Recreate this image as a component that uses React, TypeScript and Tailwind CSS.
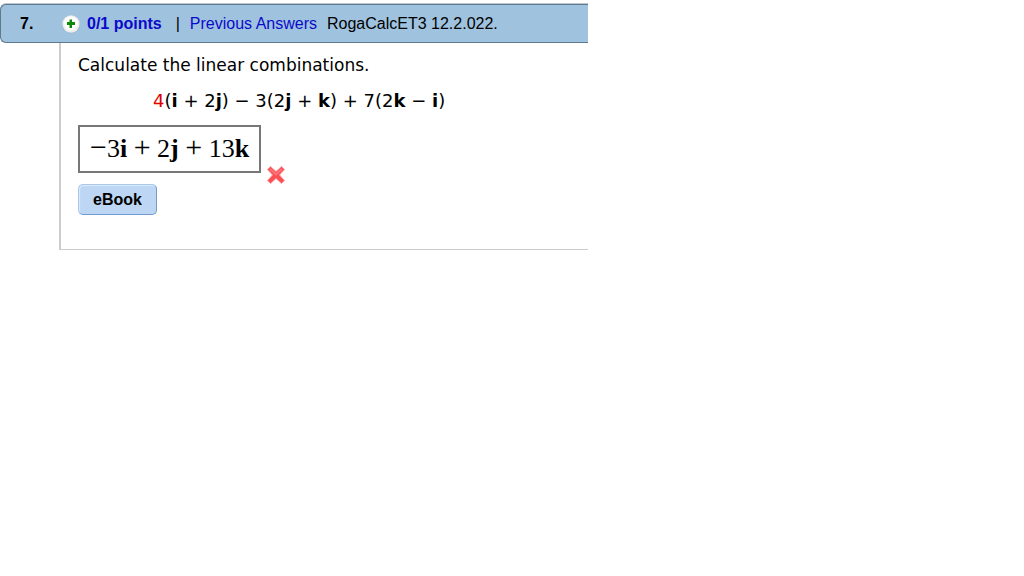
import { ReactNode } from 'react';

function ExpandIcon() {
  return (
    <svg className="block h-5 w-5" viewBox="0 0 20 20" aria-hidden="true">
      <circle cx="10" cy="10.5" r="9" fill="#7f9db5" opacity="0.5" />
      <circle cx="10" cy="10" r="8.7" fill="#eeeeee" />
      <circle cx="10" cy="9.5" r="7" fill="#ffffff" />
      <path d="M8.5 5.5h2.500v2.500H14v3h-3V14H8.500v-3H6V8h2.500z" fill="#0c8a0c" />
    </svg>
  );
}

function WrongIcon() {
  return (
    <svg className="block h-5 w-5" viewBox="0 0 20 20" role="img" aria-label="Incorrect">
      <path
        d="M4.500 1.500 10 6.500l5.500-5 3 3L13.500 10l5 5.500-3 3L10 13.500l-5.500 5-3-3 5-5.500-5-5.500z"
        fill="#fb4f54"
        stroke="#fd9a9d"
        strokeWidth="1"
        strokeLinejoin="round"
      />
      <path d="M4.500 4.500 10 9.500l5.500-5" stroke="#fd7377" strokeWidth="2" fill="none" strokeLinecap="round" />
    </svg>
  );
}

function Vec({ children }: { children: ReactNode }) {
  return <b className="font-bold">{children}</b>;
}

function Op({ children }: { children: ReactNode }) {
  return <span className="text-[30px] leading-none">{children}</span>;
}

export default function App() {
  return (
    <main className="w-full max-w-[588px] pt-1 text-black">
      {/* Question header */}
      <header className="flex h-[39px] items-center rounded-l-md border-y border-l border-[#5f7a8e] bg-[#9fc2df] pt-px font-['Liberation_Sans',Arial,sans-serif] text-base whitespace-nowrap shadow-[0_-1px_0_#b9c6d0]">
        <span className="w-[60px] pl-[19px] font-bold">7.</span>
        <button type="button" aria-label="Show scoring details" className="mr-[6px] cursor-pointer">
          <ExpandIcon />
        </button>
        <a href="#points" className="font-bold text-[#0a0acb]">0/1 points</a>
        <span className="mr-[10px] ml-[14px]">|</span>
        <a href="#previous" className="mr-[10px] text-[#0a0acb]">Previous Answers</a>
        <span>RogaCalcET3 12.2.022.</span>
      </header>

      {/* Question body */}
      <section className="ml-[59px] border-b border-l-2 border-[#cccccc] pt-2 pb-[34px] pl-[17px] font-['DejaVu_Sans',Verdana,sans-serif] text-lg">
        <p className="text-[17px] leading-7">Calculate the linear combinations.</p>
        <p className="mt-2 pl-[75px]">
          <span className="text-[#e00000]">4</span>(<Vec>i</Vec> + 2<Vec>j</Vec>) − 3(2<Vec>j</Vec> + <Vec>k</Vec>) + 7(2<Vec>k</Vec> − <Vec>i</Vec>)
        </p>

        <div className="mt-[10px] flex items-end gap-[5px]">
          <div
            role="math"
            aria-label="Your answer"
            className="flex h-12 items-center border-2 border-[#777777] px-[10px] font-['Liberation_Serif','Times_New_Roman',serif] text-[26px] whitespace-nowrap"
          >
            <span>
              <Op>−</Op>3<Vec>i</Vec> <Op>+</Op> 2<Vec>j</Vec> <Op>+</Op> 13<Vec>k</Vec>
            </span>
          </div>
          <span className="-mb-3">
            <WrongIcon />
          </span>
        </div>

        <button
          type="button"
          className="mt-[11px] block h-[31px] cursor-pointer rounded-[5px] border border-[#a9c8ec] border-r-[#6f9bd0] border-b-[#6f9bd0] bg-[#bcd6f4] px-[14px] font-['Liberation_Sans',Arial,sans-serif] text-base font-bold shadow-[inset_1px_1px_1px_#dcebfb]"
        >
          eBook
        </button>
      </section>
    </main>
  );
}
